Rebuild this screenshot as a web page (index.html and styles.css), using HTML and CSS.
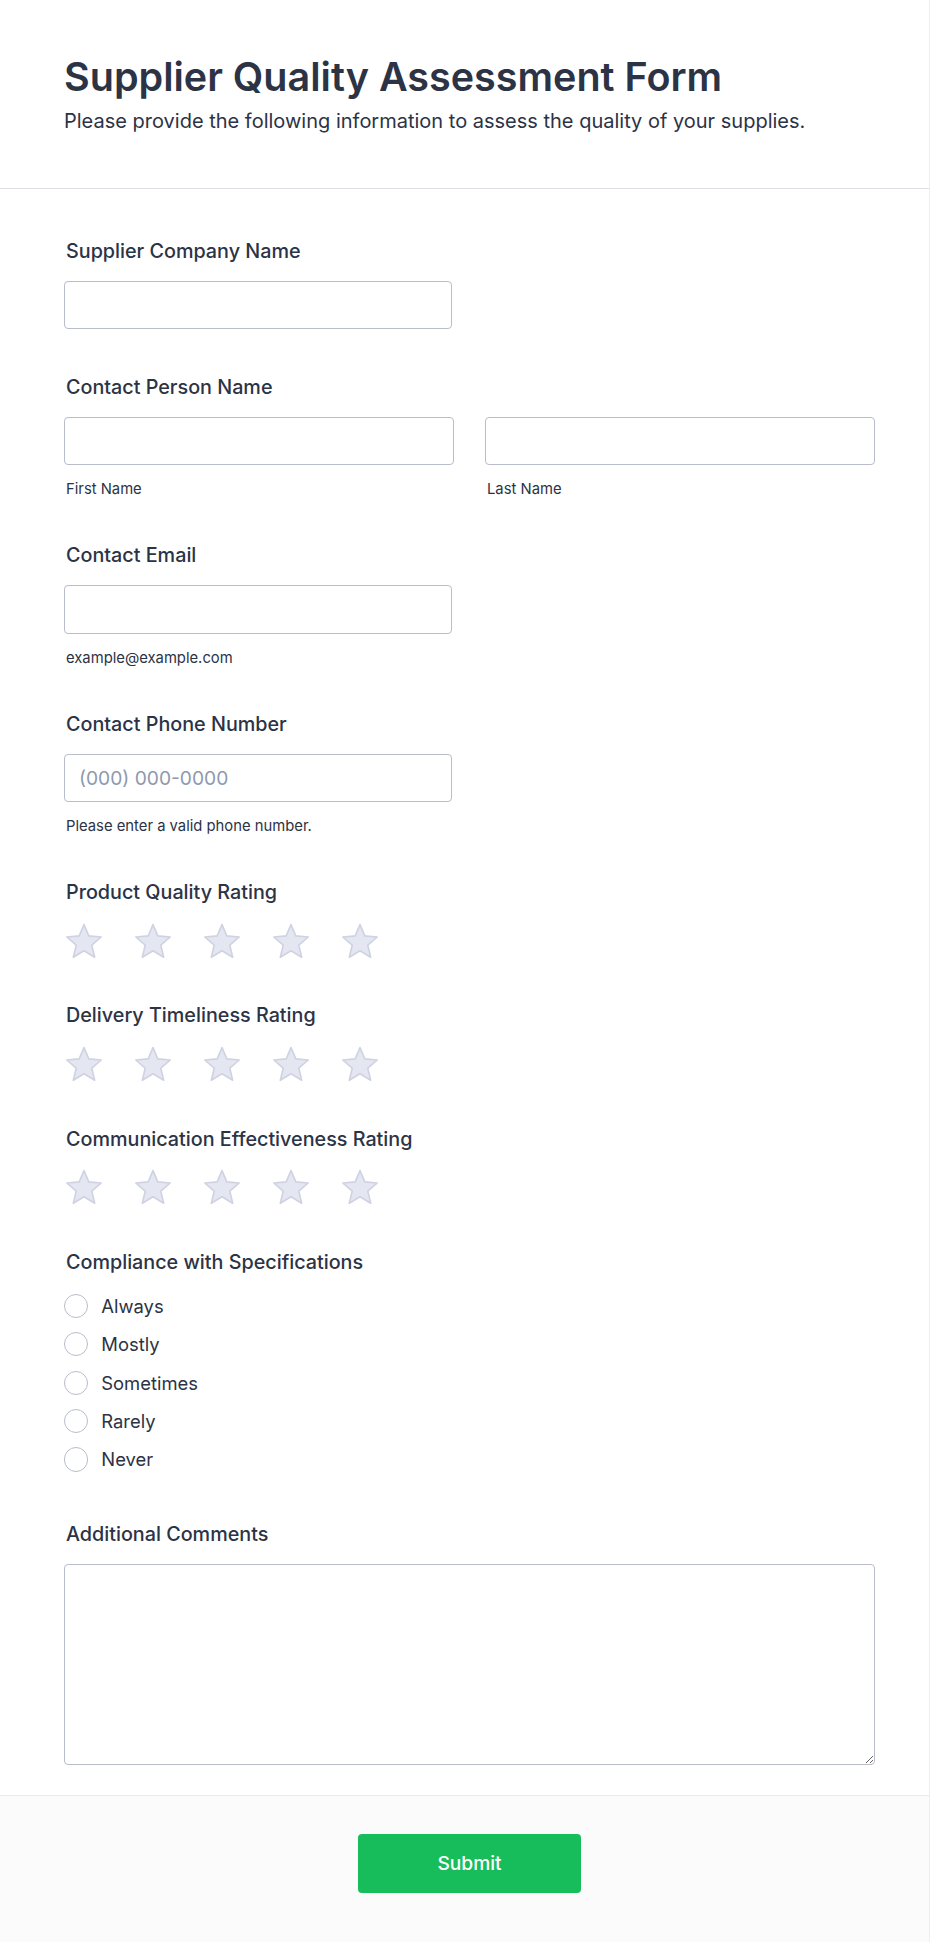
FILE: index.html
```html
<!DOCTYPE html>
<html lang="en">
<head>
<meta charset="utf-8">
<title>Supplier Quality Assessment Form</title>
<link rel="stylesheet" href="styles.css">
</head>
<body>
<div class="form">
  <header class="form-header">
    <h1 class="form-title">Supplier Quality Assessment Form</h1>
    <p class="form-subtitle">Please provide the following information to assess the quality of your supplies.</p>
  </header>

  <div class="form-body">
    <div class="field">
      <label class="field-label" for="company">Supplier Company Name</label>
      <input class="text-input half" id="company" type="text">
    </div>

    <div class="field field-sub">
      <span class="field-label">Contact Person Name</span>
      <div class="name-row">
        <div class="name-col">
          <input class="text-input" type="text" aria-label="First Name">
          <span class="sublabel">First Name</span>
        </div>
        <div class="name-col">
          <input class="text-input" type="text" aria-label="Last Name">
          <span class="sublabel">Last Name</span>
        </div>
      </div>
    </div>

    <div class="field field-sub">
      <label class="field-label" for="email">Contact Email</label>
      <input class="text-input half" id="email" type="email">
      <span class="sublabel">example@example.com</span>
    </div>

    <div class="field field-sub">
      <label class="field-label" for="phone">Contact Phone Number</label>
      <input class="text-input half" id="phone" type="tel" placeholder="(000) 000-0000">
      <span class="sublabel">Please enter a valid phone number.</span>
    </div>

    <div class="field field-stars">
      <span class="field-label">Product Quality Rating</span>
      <div class="stars">
        <svg class="star" viewBox="0 0 40 36"><path d="M20 1.6L24.8 12.9L37.2 14L27.8 22.2L30.7 34.3L20 27.8L9.3 34.3L12.2 22.2L2.8 14L15.2 12.9Z"/></svg>
        <svg class="star" viewBox="0 0 40 36"><path d="M20 1.6L24.8 12.9L37.2 14L27.8 22.2L30.7 34.3L20 27.8L9.3 34.3L12.2 22.2L2.8 14L15.2 12.9Z"/></svg>
        <svg class="star" viewBox="0 0 40 36"><path d="M20 1.6L24.8 12.9L37.2 14L27.8 22.2L30.7 34.3L20 27.8L9.3 34.3L12.2 22.2L2.8 14L15.2 12.9Z"/></svg>
        <svg class="star" viewBox="0 0 40 36"><path d="M20 1.6L24.8 12.9L37.2 14L27.8 22.2L30.7 34.3L20 27.8L9.3 34.3L12.2 22.2L2.8 14L15.2 12.9Z"/></svg>
        <svg class="star" viewBox="0 0 40 36"><path d="M20 1.6L24.8 12.9L37.2 14L27.8 22.2L30.7 34.3L20 27.8L9.3 34.3L12.2 22.2L2.8 14L15.2 12.9Z"/></svg>
      </div>
    </div>

    <div class="field field-stars">
      <span class="field-label">Delivery Timeliness Rating</span>
      <div class="stars">
        <svg class="star" viewBox="0 0 40 36"><path d="M20 1.6L24.8 12.9L37.2 14L27.8 22.2L30.7 34.3L20 27.8L9.3 34.3L12.2 22.2L2.8 14L15.2 12.9Z"/></svg>
        <svg class="star" viewBox="0 0 40 36"><path d="M20 1.6L24.8 12.9L37.2 14L27.8 22.2L30.7 34.3L20 27.8L9.3 34.3L12.2 22.2L2.8 14L15.2 12.9Z"/></svg>
        <svg class="star" viewBox="0 0 40 36"><path d="M20 1.6L24.8 12.9L37.2 14L27.8 22.2L30.7 34.3L20 27.8L9.3 34.3L12.2 22.2L2.8 14L15.2 12.9Z"/></svg>
        <svg class="star" viewBox="0 0 40 36"><path d="M20 1.6L24.8 12.9L37.2 14L27.8 22.2L30.7 34.3L20 27.8L9.3 34.3L12.2 22.2L2.8 14L15.2 12.9Z"/></svg>
        <svg class="star" viewBox="0 0 40 36"><path d="M20 1.6L24.8 12.9L37.2 14L27.8 22.2L30.7 34.3L20 27.8L9.3 34.3L12.2 22.2L2.8 14L15.2 12.9Z"/></svg>
      </div>
    </div>

    <div class="field field-stars">
      <span class="field-label">Communication Effectiveness Rating</span>
      <div class="stars">
        <svg class="star" viewBox="0 0 40 36"><path d="M20 1.6L24.8 12.9L37.2 14L27.8 22.2L30.7 34.3L20 27.8L9.3 34.3L12.2 22.2L2.8 14L15.2 12.9Z"/></svg>
        <svg class="star" viewBox="0 0 40 36"><path d="M20 1.6L24.8 12.9L37.2 14L27.8 22.2L30.7 34.3L20 27.8L9.3 34.3L12.2 22.2L2.8 14L15.2 12.9Z"/></svg>
        <svg class="star" viewBox="0 0 40 36"><path d="M20 1.6L24.8 12.9L37.2 14L27.8 22.2L30.7 34.3L20 27.8L9.3 34.3L12.2 22.2L2.8 14L15.2 12.9Z"/></svg>
        <svg class="star" viewBox="0 0 40 36"><path d="M20 1.6L24.8 12.9L37.2 14L27.8 22.2L30.7 34.3L20 27.8L9.3 34.3L12.2 22.2L2.8 14L15.2 12.9Z"/></svg>
        <svg class="star" viewBox="0 0 40 36"><path d="M20 1.6L24.8 12.9L37.2 14L27.8 22.2L30.7 34.3L20 27.8L9.3 34.3L12.2 22.2L2.8 14L15.2 12.9Z"/></svg>
      </div>
    </div>

    <div class="field field-radio">
      <span class="field-label">Compliance with Specifications</span>
      <div class="radio-list">
        <label class="radio-row"><input class="radio" type="radio" name="compliance"><span>Always</span></label>
        <label class="radio-row"><input class="radio" type="radio" name="compliance"><span>Mostly</span></label>
        <label class="radio-row"><input class="radio" type="radio" name="compliance"><span>Sometimes</span></label>
        <label class="radio-row"><input class="radio" type="radio" name="compliance"><span>Rarely</span></label>
        <label class="radio-row"><input class="radio" type="radio" name="compliance"><span>Never</span></label>
      </div>
    </div>

    <div class="field field-last">
      <label class="field-label" for="comments">Additional Comments</label>
      <textarea class="textarea" id="comments"></textarea>
    </div>
  </div>

  <div class="form-footer">
    <button class="submit-btn" type="submit">Submit</button>
  </div>
</div>
</body>
</html>
```

FILE: styles.css
```css
* {
  box-sizing: border-box;
}

html, body {
  margin: 0;
  padding: 0;
  background: #ffffff;
}

body {
  font-family: "Inter", "Noto Sans", sans-serif;
  color: #2c3345;
}

.form {
  width: 930px;
  border-right: 1px solid #eceef4;
  background: #ffffff;
}

.form-header {
  padding: 54px 55px 55.5px 64px;
  border-bottom: 1px solid #dcdde8;
}

.form-title {
  margin: 0;
  font-size: 39.5px;
  line-height: 47px;
  font-weight: 600;
  color: #2c3345;
}

.form-subtitle {
  margin: 7.5px 0 0 0;
  font-size: 20px;
  line-height: 24px;
  font-weight: 400;
  color: #2c3345;
}

.form-body {
  padding: 49.5px 54px 30px 64px;
  display: flex;
  flex-direction: column;
}

.field {
  display: flex;
  flex-direction: column;
  align-items: flex-start;
  margin-bottom: 46px;
}

.field-sub {
  margin-bottom: 44px;
}

.field-stars {
  margin-bottom: 44.8px;
}

.field-radio {
  margin-bottom: 50.5px;
}

.field-last {
  margin-bottom: 0;
  align-items: stretch;
}

.field-label {
  display: block;
  padding-left: 2px;
  font-size: 19.75px;
  line-height: 24px;
  font-weight: 500;
  color: #2c3345;
  margin-bottom: 18px;
}

.text-input {
  display: block;
  width: 100%;
  height: 48.4px;
  padding: 0 14px;
  border: 1px solid #b8bdc9;
  border-radius: 4px;
  background: #ffffff;
  font-family: inherit;
  font-size: 19.2px;
  color: #2c3345;
  outline: none;
}

.text-input.half {
  width: 388px;
}

.text-input::placeholder {
  color: #8e99ad;
}

.name-row {
  display: flex;
  gap: 31px;
  width: 100%;
}

.name-col {
  flex: 1;
  display: flex;
  flex-direction: column;
}

.sublabel {
  display: block;
  margin-top: 14px;
  padding-left: 2px;
  font-size: 14.8px;
  line-height: 20px;
  color: #2c3345;
}

.stars {
  display: flex;
  gap: 29px;
  margin-top: 0.6px;
}

.star {
  width: 40px;
  height: 36px;
  overflow: visible;
}

.star path {
  fill: #e4e6f1;
  stroke: #cfd2e1;
  stroke-width: 1.6;
  stroke-linejoin: round;
}

.radio-list {
  display: flex;
  flex-direction: column;
  gap: 14.1px;
  margin-top: 1.5px;
}

.radio-row {
  display: flex;
  align-items: center;
  gap: 13px;
  height: 24.3px;
  font-size: 18.4px;
  line-height: 24px;
  color: #2c3345;
}

.radio {
  appearance: none;
  -webkit-appearance: none;
  margin: 0;
  width: 24.3px;
  height: 24.3px;
  border: 1.5px solid #b8bdc9;
  border-radius: 50%;
  background: #ffffff;
  flex-shrink: 0;
}

.textarea {
  display: block;
  width: 100%;
  height: 201px;
  border: 1px solid #b8bdc9;
  border-radius: 4px;
  background: #ffffff;
  font-family: inherit;
  font-size: 19.2px;
  padding: 10px 14px;
  outline: none;
}

.form-footer {
  display: flex;
  justify-content: center;
  padding: 37.5px 54px 50px 64px;
  border-top: 1px solid #e8e9f0;
  background: #fbfbfc;
}

.submit-btn {
  width: 223px;
  height: 59px;
  border: none;
  border-radius: 4px;
  background: #18bd5b;
  color: #ffffff;
  font-family: inherit;
  font-size: 19.2px;
  font-weight: 500;
  cursor: pointer;
}
```
